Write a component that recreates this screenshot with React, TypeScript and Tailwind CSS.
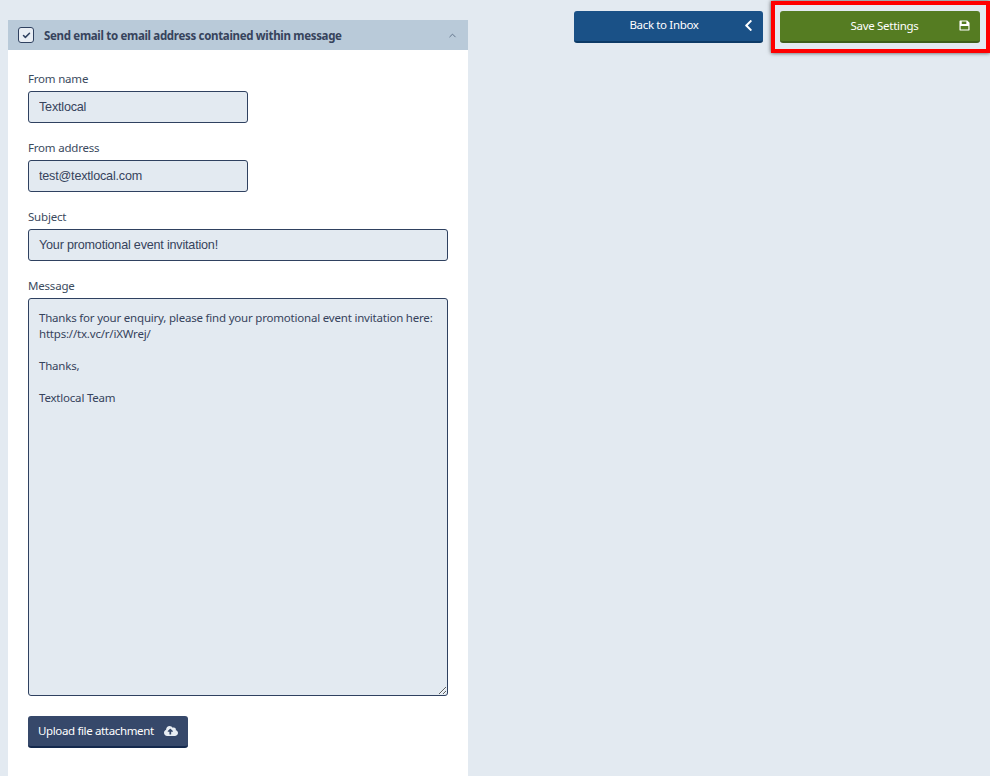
import { ChevronUp, Check } from 'lucide-react';
import { FaCloudUploadAlt, FaChevronLeft } from 'react-icons/fa';

const uiFont = "font-['Noto_Sans',sans-serif] text-[11.5px] tracking-[-0.2px]";
const inputFont = "font-['Liberation_Sans',Arial,sans-serif]";

function Field({ label, value, wide }: { label: string; value: string; wide?: boolean }) {
  return (
    <div className="mb-[17px]">
      <label className={`mb-[4px] block leading-[16px] text-[#3b4a5e] ${uiFont}`}>{label}</label>
      <input
        readOnly
        value={value}
        className={`block h-[32px] ${wide ? 'w-[420px]' : 'w-[220px]'} rounded-[3px] border border-[#2f4160] bg-[#e3eaf1] px-[10px] text-[12.6px] text-[#36435c] outline-none ${inputFont}`}
      />
    </div>
  );
}

function SaveIcon() {
  return (
    <svg viewBox="0 0 12 12" className="absolute right-[10px] top-[9px] h-[11px] w-[11px]" fill="currentColor">
      <path
        fillRule="evenodd"
        d="M1.5 0.5H9L11.5 3V10.5C11.5 11 11 11.5 10.5 11.5H1.5C1 11.5 0.5 11 0.5 10.5V1.5C0.5 1 1 0.5 1.5 0.5ZM3 1.6V4.4H8V1.6ZM1.8 6.6V10.4H10.2V6.6Z"
      />
    </svg>
  );
}

export default function App() {
  return (
    <div className={`relative h-[776px] w-[990px] overflow-hidden bg-[#e3eaf1] ${uiFont}`}>
      <div className="flex items-start pl-[8px] pt-[11px]">
        <div className="mt-[9px] h-[770px] w-[460px] rounded-b-[4px] bg-white">
          <div className="flex h-[30px] items-center justify-between bg-[#b9cad9] pl-[10px] pr-[10px]">
            <div className="flex items-center gap-[10px]">
              <span className="flex h-[16px] w-[16px] items-center justify-center rounded-[3px] border border-[#2f4160] bg-[#e9eef4]">
                <Check size={9} strokeWidth={4} className="text-[#2f4160]" />
              </span>
              <span className="pt-[1px] font-bold tracking-[-0.32px] text-[#36435c]">Send email to email address contained within message</span>
            </div>
            <ChevronUp size={11} strokeWidth={2} className="text-[#5b6d85]" />
          </div>
          <div className="px-[20px] pt-[21px]">
            <Field label="From name" value="Textlocal" />
            <Field label="From address" value="test@textlocal.com" />
            <Field label="Subject" value="Your promotional event invitation!" wide />
            <label className="mb-[4px] block leading-[16px] text-[#3b4a5e]">Message</label>
            <textarea
              readOnly
              value={'Thanks for your enquiry, please find your promotional event invitation here:\nhttps://tx.vc/r/iXWrej/\n\nThanks,\n\nTextlocal Team'}
              className={`block h-[398px] w-[420px] rounded-[3px] border border-[#2f4160] bg-[#e3eaf1] px-[10px] py-[11px] leading-[16px] text-[#36435c] outline-none ${uiFont}`}
            />
            <button className="mt-[20px] flex h-[32px] w-[160px] items-center justify-between whitespace-nowrap rounded-[3px] border-b-2 border-[#14294d] bg-[#36486a] pl-[10px] pr-[10px] tracking-[-0.36px] text-white">
              <span>Upload file attachment</span>
              <FaCloudUploadAlt size={14} className="text-[#e8edf3]" />
            </button>
          </div>
        </div>
        <div className="ml-[106px] flex gap-[17px]">
          <button className="relative flex h-[32px] w-[189px] items-center justify-center rounded-[3px] border-b-2 border-[#0d3a66] bg-[#1a5187] pb-[2px] pr-[9px] tracking-[-0.35px] text-white">
            Back to Inbox
            <FaChevronLeft size={13} className="absolute right-[8px] top-[8px]" />
          </button>
          <button className="relative flex h-[32px] w-[200px] items-center justify-center rounded-[3px] border-b-2 border-[#3f5f1a] bg-[#557c22] pl-[9px] tracking-[-0.3px] text-white">
            Save Settings
            <SaveIcon />
          </button>
        </div>
      </div>
      <div className="absolute left-[771px] top-[1px] h-[52px] w-[219px] border-[4px] border-[#ff0000] shadow-[0_0_4px_rgba(0,0,0,0.7)]" />
    </div>
  );
}
